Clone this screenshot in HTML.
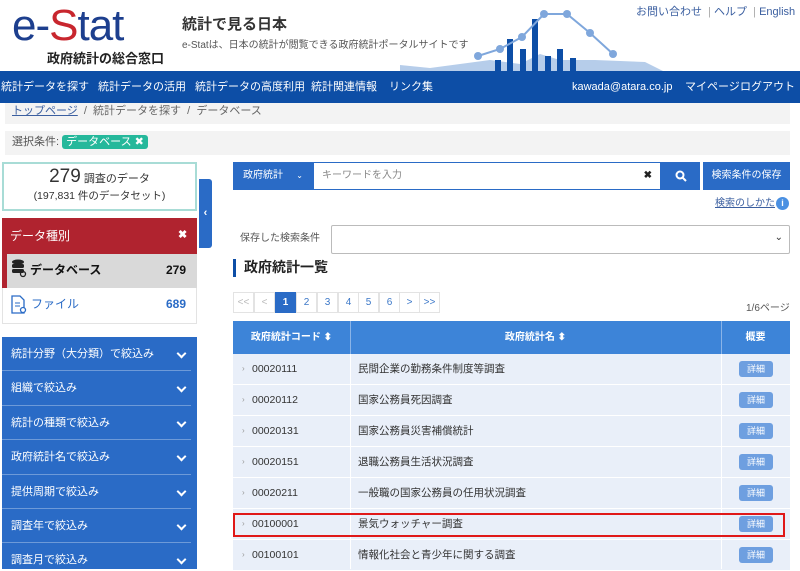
<!DOCTYPE html>
<html><head><meta charset="utf-8">
<style>
*{box-sizing:border-box;margin:0;padding:0}
body{width:800px;height:569px;overflow:hidden;background:#fff;font-family:"Liberation Sans","Noto Sans CJK JP",sans-serif;font-size:11px;color:#333;position:relative;line-height:1.2}
.a{position:absolute;white-space:nowrap}
.nav{top:71px;left:0;width:800px;height:32px;background:#0d4ea6;color:#fff;font-size:11px}
.nav span{position:absolute;top:0;line-height:32px}
.side{left:2px;width:195px;background:#2a6bc6;color:#fff;font-size:11px}
.side div{height:34.4px;line-height:34px;padding-left:9px;border-bottom:1px solid #6d9ad8;margin:0 6px 0 0;position:relative}
.side div:after{content:"";position:absolute;right:6px;top:13px;width:5px;height:5px;border-right:2px solid #fff;border-bottom:2px solid #fff;transform:rotate(45deg)}
.row{left:233px;width:557px;height:31px;background:#e9eff9;border-bottom:1px solid #fff;font-size:10.5px;color:#333}
.row span{position:absolute;top:0;line-height:30px}
.row .c{left:9px;color:#999;font-size:8px}
.row .d{left:506px;top:7px;width:34px;height:16px;background:#6e9fe0;border-radius:3px;color:#fff;font-size:9px;text-align:center;line-height:16px}
.pg{top:292px;height:21px;width:21px;border:1px solid #e3e3e3;text-align:center;line-height:19px;font-size:10px;color:#3c78c8}
</style></head><body>
<div class="a" style="left:12px;top:4px;font-size:44px;letter-spacing:-1px;color:#1d3f8e;line-height:44px">e-<span style="color:#c8262e">S</span>tat</div>
<div class="a" style="left:47px;top:51px;font-size:13px;font-weight:bold;color:#222">政府統計の総合窓口</div>
<div class="a" style="left:182px;top:16px;font-size:15px;font-weight:bold;color:#333">統計で見る日本</div>
<div class="a" style="left:182px;top:40px;font-size:10px;color:#555">e-Statは、日本の統計が閲覧できる政府統計ポータルサイトです</div>
<svg class="a" style="left:400px;top:0" width="270" height="72">
<polygon points="0,65 30,68 90,60 120,64 140,54 160,60 195,60 245,62 265,72 0,72" fill="#b6cdea"/>
<g fill="#0d4ea6"><rect x="95" y="60" width="6" height="12"/><rect x="107" y="39" width="6" height="33"/><rect x="120" y="49" width="6" height="23"/><rect x="132" y="19" width="6" height="53"/><rect x="145" y="56" width="6" height="16"/><rect x="157" y="49" width="6" height="23"/><rect x="170" y="58" width="6" height="14"/></g>
<polyline points="78,56 100,49 122,37 144,14 167,14 190,33 213,54" fill="none" stroke="#7fa7dc" stroke-width="2"/>
<g fill="#7fa7dc"><circle cx="78" cy="56" r="4"/><circle cx="100" cy="49" r="4"/><circle cx="122" cy="37" r="4"/><circle cx="144" cy="14" r="4"/><circle cx="167" cy="14" r="4"/><circle cx="190" cy="33" r="4"/><circle cx="213" cy="54" r="4"/></g>
</svg>
<div class="a" style="left:636px;top:6px;font-size:11px;color:#3b5fa0">お問い合わせ<span style="color:#aaa"> &nbsp;| </span>ヘルプ<span style="color:#aaa"> &nbsp;| </span>English</div>
<div class="a nav"><span style="left:1px">統計データを探す</span><span style="left:98px">統計データの活用</span><span style="left:195px">統計データの高度利用</span><span style="left:311px">統計関連情報</span><span style="left:389px">リンク集</span><span style="left:572px">kawada@atara.co.jp</span><span style="left:685px">マイページ</span><span style="left:740px">ログアウト</span></div>
<div class="a" style="left:5px;top:103px;width:785px;height:21px;background:#f3f3f3;font-size:11px;color:#666;padding:2px 7px"><span style="color:#3b5fa0;text-decoration:underline">トップページ</span> &nbsp;/&nbsp; 統計データを探す &nbsp;/&nbsp; データベース</div>
<div class="a" style="left:5px;top:131px;width:785px;height:24px;background:#f3f3f3;font-size:11px;color:#555;padding:5px 7px">選択条件: <span style="background:#25b89b;color:#fff;padding:1px 4px;border-radius:3px">データベース ✖</span></div>
<div class="a" style="left:2px;top:162px;width:195px;height:49px;border:2px solid #a8dcd6;text-align:center;color:#333">
<div style="font-size:19px;line-height:22px;margin-top:2px">279<span style="font-size:11px"> 調査のデータ</span></div><div style="font-size:10.5px">(197,831 件のデータセット)</div></div>
<div class="a" style="left:199px;top:179px;width:13px;height:69px;background:#2a6bc6;border-radius:0 3px 3px 0;color:#fff;font-size:11px;font-weight:bold;text-align:center;line-height:69px">‹</div>
<div class="a" style="left:2px;top:218px;width:195px;height:106px;border:1px solid #e3e3e3;background:#fff"></div>
<div class="a" style="left:2px;top:218px;width:195px;height:70px;background:#b0232f"></div>
<div class="a" style="left:10px;top:229px;color:#fff;font-size:12px">データ種別</div>
<div class="a" style="left:178px;top:229px;color:#fff;font-size:11px;font-weight:bold">✖</div>
<div class="a" style="left:7px;top:254px;width:190px;height:34px;background:#d9d9d9"></div>
<svg class="a" style="left:11px;top:259px" width="16" height="20"><g fill="#222"><ellipse cx="7" cy="3" rx="6" ry="2.5"/><rect x="1" y="5" width="12" height="4" rx="1.5"/><rect x="1" y="10" width="12" height="4" rx="1.5"/></g><circle cx="12" cy="15" r="2.5" fill="none" stroke="#222" stroke-width="1.3"/></svg>
<div class="a" style="left:30px;top:263px;font-size:12px;font-weight:bold;color:#111">データベース</div>
<div class="a" style="left:166px;top:263px;font-size:12px;font-weight:bold;color:#111">279</div>
<svg class="a" style="left:11px;top:295px" width="16" height="20"><path d="M1 1h8l4 4v13H1z" fill="none" stroke="#2a6bc6" stroke-width="1.3"/><path d="M4 8h5M4 11h5" stroke="#2a6bc6"/><circle cx="12" cy="15" r="2.5" fill="#fff" stroke="#2a6bc6" stroke-width="1.3"/></svg>
<div class="a" style="left:31px;top:297px;font-size:12px;color:#2a6bc6">ファイル</div>
<div class="a" style="left:166px;top:297px;font-size:12px;font-weight:bold;color:#2a6bc6">689</div>
<div class="a side" style="top:337px;height:232px;overflow:hidden">
<div>統計分野（大分類）で絞込み</div><div>組織で絞込み</div><div>統計の種類で絞込み</div><div>政府統計名で絞込み</div><div>提供周期で絞込み</div><div>調査年で絞込み</div><div>調査月で絞込み</div></div>
<div class="a" style="left:233px;top:162px;width:80px;height:28px;background:#2a6bc6;color:#fff;font-size:10px;padding:0 10px;line-height:28px">政府統計 <span style="float:right;font-size:8px">⌄</span></div>
<div class="a" style="left:313px;top:162px;width:348px;height:28px;border:1px solid #2a6bc6;font-size:10px;color:#888;padding:0 8px;line-height:26px">キーワードを入力<span style="float:right;color:#222;font-weight:bold">✖</span></div>
<div class="a" style="left:661px;top:162px;width:39px;height:28px;background:#2a6bc6"></div>
<svg class="a" style="left:675px;top:170px" width="12" height="12"><circle cx="5" cy="5" r="3.5" fill="none" stroke="#fff" stroke-width="2"/><path d="M7.5 7.5L11 11" stroke="#fff" stroke-width="2"/></svg>
<div class="a" style="left:703px;top:162px;width:87px;height:28px;background:#2a6bc6;color:#fff;font-size:10px;text-align:center;line-height:28px">検索条件の保存</div>
<div class="a" style="left:715px;top:198px;font-size:10px;color:#3b5fa0;text-decoration:underline">検索のしかた</div>
<div class="a" style="left:776px;top:197px;width:13px;height:13px;border-radius:50%;background:#4a90e2;color:#fff;font-size:9px;font-weight:bold;text-align:center;line-height:13px">i</div>
<div class="a" style="left:240px;top:233px;font-size:10px;color:#555">保存した検索条件</div>
<div class="a" style="left:331px;top:225px;width:459px;height:29px;border:1px solid #bbb;border-radius:2px"><span style="position:absolute;right:6px;top:6px;font-size:10px">⌄</span></div>
<div class="a" style="left:233px;top:259px;width:3px;height:18px;background:#0d4ea6"></div>
<div class="a" style="left:244px;top:259px;font-size:14px;font-weight:bold;color:#222">政府統計一覧</div>
<div class="a pg" style="left:233px;color:#bbb">&lt;&lt;</div>
<div class="a pg" style="left:254px;color:#bbb">&lt;</div>
<div class="a pg" style="left:275px;background:#2a6bc6;color:#fff;font-weight:bold;border-color:#2a6bc6">1</div>
<div class="a pg" style="left:296px">2</div><div class="a pg" style="left:317px">3</div><div class="a pg" style="left:338px">4</div><div class="a pg" style="left:358px">5</div><div class="a pg" style="left:379px">6</div><div class="a pg" style="left:399px">&gt;</div><div class="a pg" style="left:419px">&gt;&gt;</div>
<div class="a" style="left:746px;top:303px;font-size:10px;color:#555">1/6ページ</div>
<div class="a" style="left:233px;top:321px;width:557px;height:33px;background:#3d84d8;color:#fff;font-size:10px;font-weight:bold">
<span style="position:absolute;left:0;width:117px;text-align:center;line-height:33px">政府統計コード ⬍</span>
<span style="position:absolute;left:117px;top:0;width:1px;height:33px;background:#8ab4e8"></span>
<span style="position:absolute;left:117px;width:371px;text-align:center;line-height:33px">政府統計名 ⬍</span>
<span style="position:absolute;left:488px;top:0;width:1px;height:33px;background:#8ab4e8"></span>
<span style="position:absolute;left:488px;width:69px;text-align:center;line-height:33px">概要</span></div>
<div class="a row" style="top:354px"><span class="c">›</span><span style="left:19px">00020111</span><span style="left:125px">民間企業の勤務条件制度等調査</span><span class="d">詳細</span></div>
<div class="a row" style="top:385px"><span class="c">›</span><span style="left:19px">00020112</span><span style="left:125px">国家公務員死因調査</span><span class="d">詳細</span></div>
<div class="a row" style="top:416px"><span class="c">›</span><span style="left:19px">00020131</span><span style="left:125px">国家公務員災害補償統計</span><span class="d">詳細</span></div>
<div class="a row" style="top:447px"><span class="c">›</span><span style="left:19px">00020151</span><span style="left:125px">退職公務員生活状況調査</span><span class="d">詳細</span></div>
<div class="a row" style="top:478px"><span class="c">›</span><span style="left:19px">00020211</span><span style="left:125px">一般職の国家公務員の任用状況調査</span><span class="d">詳細</span></div>
<div class="a row" style="top:509px"><span class="c">›</span><span style="left:19px">00100001</span><span style="left:125px">景気ウォッチャー調査</span><span class="d">詳細</span></div>
<div class="a row" style="top:540px"><span class="c">›</span><span style="left:19px">00100101</span><span style="left:125px">情報化社会と青少年に関する調査</span><span class="d">詳細</span></div>
<div class="a" style="left:350px;top:354px;width:1px;height:215px;background:#fff"></div>
<div class="a" style="left:721px;top:354px;width:1px;height:215px;background:#fff"></div>
<div class="a" style="left:233px;top:513px;width:552px;height:24px;border:2px solid #e01818"></div>
</body></html>
